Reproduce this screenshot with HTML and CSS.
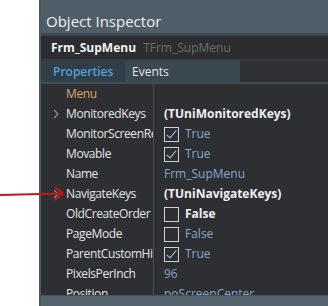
FILE: index.html
```html
<!DOCTYPE html>
<html lang="en">
<head>
  <meta charset="UTF-8">
  <title>Object Inspector</title>
  <link rel="stylesheet" href="styles.css">
</head>
<body>

  <div class="stage">
    <div class="inspector">
      <!-- Window caption -->
      <div class="caption">Object Inspector</div>

      <!-- Selected component -->
      <div class="object-row">
        <span class="object-name">Frm_SupMenu</span>
        <span class="object-class">TFrm_SupMenu</span>
      </div>

      <!-- Tabs -->
      <div class="tabs">
        <div class="tab active">Properties</div>
        <div class="tab">Events</div>
      </div>

      <!-- Property grid -->
      <div class="grid">
        <div class="row">
          <div class="prop"><span class="expander"></span><span class="category">Menu</span></div>
          <div class="value"></div>
        </div>
        <div class="row">
          <div class="prop">
            <span class="expander"><svg width="6" height="10" viewBox="0 0 6 10"><polyline points="1,1 5,5 1,9" fill="none" stroke="#8c9094" stroke-width="1.2"/></svg></span>
            <span class="name">MonitoredKeys</span>
          </div>
          <div class="value"><span class="bold">(TUniMonitoredKeys)</span></div>
        </div>
        <div class="row">
          <div class="prop"><span class="expander"></span><span class="name">MonitorScreenResize</span></div>
          <div class="value"><span class="check on"></span><span class="val">True</span></div>
        </div>
        <div class="row">
          <div class="prop"><span class="expander"></span><span class="name">Movable</span></div>
          <div class="value"><span class="check on"></span><span class="val">True</span></div>
        </div>
        <div class="row">
          <div class="prop"><span class="expander"></span><span class="name">Name</span></div>
          <div class="value"><span class="val">Frm_SupMenu</span></div>
        </div>
        <div class="row">
          <div class="prop">
            <span class="expander"><svg width="6" height="10" viewBox="0 0 6 10"><polyline points="1,1 5,5 1,9" fill="none" stroke="#8c9094" stroke-width="1.2"/></svg></span>
            <span class="name">NavigateKeys</span>
          </div>
          <div class="value"><span class="bold">(TUniNavigateKeys)</span></div>
        </div>
        <div class="row">
          <div class="prop"><span class="expander"></span><span class="name">OldCreateOrder</span></div>
          <div class="value"><span class="check"></span><span class="bold">False</span></div>
        </div>
        <div class="row">
          <div class="prop"><span class="expander"></span><span class="name">PageMode</span></div>
          <div class="value"><span class="check"></span><span class="val">False</span></div>
        </div>
        <div class="row">
          <div class="prop"><span class="expander"></span><span class="name">ParentCustomHint</span></div>
          <div class="value"><span class="check on"></span><span class="val">True</span></div>
        </div>
        <div class="row">
          <div class="prop"><span class="expander"></span><span class="name">PixelsPerInch</span></div>
          <div class="value"><span class="val">96</span></div>
        </div>
        <div class="row">
          <div class="prop"><span class="expander"></span><span class="name">Position</span></div>
          <div class="value"><span class="val">poScreenCenter</span></div>
        </div>
      </div>

      <div class="status"></div>
    </div>

    <!-- Red annotation arrow -->
    <svg class="arrow" width="70" height="20" viewBox="0 0 70 20">
      <path d="M0 11 L62 9.5" stroke="#c8141c" stroke-width="2" fill="none"/>
      <path d="M55 3 L62.5 9.5 L55 16" stroke="#c8141c" stroke-width="2.2" fill="none"/>
    </svg>
  </div>

</body>
</html>
```

FILE: styles.css
```css
/* Object Inspector (dark IDE style) */
body {
  margin: 0;
  padding: 0;
  background-color: #fff;
  font-family: "Open Sans", "Noto Sans", Arial, sans-serif;
  font-size: 12px;
  color: #e4e4e4;
}

.stage {
  position: relative;
  width: 328px;
  height: 306px;
  overflow: hidden;
  padding-left: 39px;
  box-sizing: border-box;
}

.inspector {
  height: 306px;
  background-color: #2d2f32;
  border-left: 2px solid #4b5964;
  display: flex;
  flex-direction: column;
}

.caption {
  height: 33px;
  padding-left: 5px;
  background-color: #4f5d68;
  border-bottom: 3px solid #3c4852;
  font-size: 15px;
  line-height: 43px;
  color: #eef1f3;
  white-space: nowrap;
}

.object-row {
  height: 23px;
  padding-left: 10px;
  background-color: #2b2d30;
  border-bottom: 2px solid #383c40;
  line-height: 24px;
  white-space: nowrap;
}

.object-name {
  font-weight: bold;
  color: #f2f2f2;
}

.object-class {
  margin-left: 4px;
  color: #6b6f73;
}

.tabs {
  height: 21px;
  display: flex;
  background-color: #2e3033;
  border-bottom: 2px solid #3f4c56;
}

.tab {
  padding-left: 7px;
  line-height: 22px;
  background-color: #3a4852;
  color: #e6e6e6;
}

.tab.active {
  width: 72px;
  padding-left: 12px;
  background-color: #303e48;
  color: #5b9ddb;
  font-weight: 600;
}

.tab + .tab {
  width: 108px;
}

.grid {
  height: 211px;
  overflow: hidden;
}

.row {
  display: flex;
  height: 20px;
  line-height: 20px;
  white-space: nowrap;
}

.prop {
  width: 112px;
  flex: none;
  overflow: hidden;
  border-right: 1px solid #4a4e53;
  display: flex;
  align-items: center;
  letter-spacing: -0.4px;
}

.expander {
  width: 13px;
  margin-left: 12px;
  flex: none;
  display: flex;
  align-items: center;
}

.name {
  color: #e4e4e4;
}

.category {
  color: #dca468;
}

.value {
  padding-left: 10px;
  display: flex;
  align-items: center;
}

.bold {
  font-weight: bold;
  color: #f0f0f0;
}

.val {
  color: #86a6cc;
}

.check {
  width: 13px;
  height: 13px;
  margin-right: 6px;
  border: 1px solid #cfd2d5;
  position: relative;
}

.check.on::after {
  content: "";
  position: absolute;
  left: 4px;
  top: 0px;
  width: 4px;
  height: 9px;
  border-right: 1.5px solid #a9c9ea;
  border-bottom: 1.5px solid #a9c9ea;
  transform: rotate(40deg);
}

.status {
  flex: 1;
  background-color: #56646f;
  border-top: 1px solid #45525b;
}

.arrow {
  position: absolute;
  left: 0;
  top: 184px;
}
```
